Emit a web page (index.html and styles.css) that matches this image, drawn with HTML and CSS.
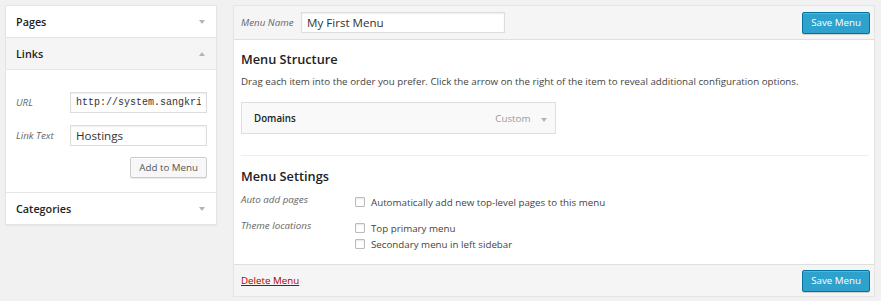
FILE: index.html
```html
<!DOCTYPE html>
<html>
<head>
    <title>Menus</title>
    <meta charset="UTF-8">
    <link rel="stylesheet" href="styles.css">
</head>
<body>
    <div class="wrap">
        <div class="sidebar">
            <div class="section">
                <div class="section-title">Pages <span class="arrow down"></span></div>
            </div>
            <div class="section open">
                <div class="section-title">Links <span class="arrow up"></span></div>
                <div class="section-body">
                    <div class="field">
                        <label>URL</label>
                        <input type="text" class="mono" value="http://system.sangkrit.net">
                    </div>
                    <div class="field">
                        <label>Link Text</label>
                        <input type="text" value="Hostings">
                    </div>
                    <div class="actions">
                        <button class="btn">Add to Menu</button>
                    </div>
                </div>
            </div>
            <div class="section">
                <div class="section-title">Categories <span class="arrow down"></span></div>
            </div>
        </div>

        <div class="menu-edit">
            <div class="menu-header">
                <label class="menu-name-label">Menu Name</label>
                <input type="text" class="menu-name" value="My First Menu">
                <button class="btn primary">Save Menu</button>
            </div>
            <div class="menu-body">
                <h3>Menu Structure</h3>
                <p class="desc">Drag each item into the order you prefer. Click the arrow on the right of the item to reveal additional configuration options.</p>
                <div class="menu-item">
                    <span class="item-title">Domains</span>
                    <span class="item-type">Custom <span class="arrow down"></span></span>
                </div>
                <div class="settings">
                    <h3>Menu Settings</h3>
                    <div class="setting-row">
                        <div class="setting-label">Auto add pages</div>
                        <div class="setting-input">
                            <label><input type="checkbox"> Automatically add new top-level pages to this menu</label>
                        </div>
                    </div>
                    <div class="setting-row">
                        <div class="setting-label">Theme locations</div>
                        <div class="setting-input">
                            <label><input type="checkbox"> Top primary menu</label>
                            <label><input type="checkbox"> Secondary menu in left sidebar</label>
                        </div>
                    </div>
                </div>
            </div>
            <div class="menu-footer">
                <a href="#" class="delete">Delete Menu</a>
                <button class="btn primary">Save Menu</button>
            </div>
        </div>
    </div>
</body>
</html>
```

FILE: styles.css
```css
body {
    margin: 0;
    background: #f1f1f1;
    font-family: "Open Sans", sans-serif;
    font-size: 9.75px;
    color: #444;
}
.wrap {
    display: flex;
    align-items: flex-start;
    padding: 5px 6px 0 5px;
    gap: 16px;
}
.sidebar {
    width: 212px;
    background: #fff;
    border: 1px solid #e5e5e5;
    box-sizing: border-box;
    box-shadow: 0 1px 1px rgba(0,0,0,0.04);
}
.section {
    border-bottom: 1px solid #e5e5e5;
}
.section:last-child {
    border-bottom: none;
}
.section-title {
    display: flex;
    justify-content: space-between;
    align-items: center;
    height: 31px;
    padding: 0 11px 0 10px;
    font-size: 10.8px;
    font-weight: 600;
    color: #222;
}
.open .section-title {
    background: #f5f5f5;
    border-bottom: 1px solid #e5e5e5;
}
.arrow {
    display: inline-block;
    width: 0;
    height: 0;
    border-left: 3px solid transparent;
    border-right: 3px solid transparent;
}
.arrow.down {
    border-top: 4px solid #b4b4b4;
}
.arrow.up {
    border-bottom: 4px solid #b4b4b4;
}
.section-body {
    padding: 22px 9px 14px 10px;
}
.field {
    display: flex;
    align-items: center;
    margin-bottom: 12px;
}
.field label, .menu-name-label, .setting-label {
    font-style: italic;
    color: #666;
}
.field label {
    width: 54px;
}
input[type=text] {
    font-family: "Open Sans", sans-serif;
    font-size: 11.6px;
    color: #333;
    border: 1px solid #ddd;
    box-shadow: inset 0 1px 2px rgba(0,0,0,0.07);
    padding: 2px 5px;
    height: 21px;
    box-sizing: border-box;
    outline: none;
}
.field input {
    width: 137px;
}
input.mono {
    font-family: "Liberation Mono", monospace;
    font-size: 10px;
}
.actions {
    display: flex;
    justify-content: flex-end;
    margin-top: -1px;
}
.btn {
    font-family: "Open Sans", sans-serif;
    font-size: 9.75px;
    height: 21px;
    padding: 0 8px;
    border: 1px solid #ccc;
    border-radius: 2px;
    background: #f7f7f7;
    color: #555;
    box-shadow: inset 0 1px 0 #fff, 0 1px 0 rgba(0,0,0,0.08);
    cursor: pointer;
}
.btn.primary {
    background: #2ea2cc;
    border-color: #0074a2;
    color: #fff;
    box-shadow: inset 0 1px 0 rgba(120,200,230,0.5), 0 1px 0 rgba(0,0,0,0.15);
    height: 22px;
    padding: 0 8px;
}
.menu-edit {
    flex: 1;
    background: #fff;
    border: 1px solid #e5e5e5;
    box-shadow: 0 1px 1px rgba(0,0,0,0.04);
}
.menu-header {
    display: flex;
    align-items: center;
    height: 33px;
    padding: 0 4px 0 7px;
    background: #f5f5f5;
    border-bottom: 1px solid #dfdfdf;
}
.menu-name-label {
    width: 60px;
}
.menu-name {
    width: 204px;
}
.menu-header .btn {
    margin-left: auto;
}
.menu-body {
    padding: 0 5px 0 7px;
}
h3 {
    font-size: 12.75px;
    font-weight: 600;
    color: #222;
    margin: 0;
}
.menu-body > h3 {
    padding-top: 10px;
}
.desc {
    margin: 7px 0 14px 0;
}
.menu-item {
    display: flex;
    justify-content: space-between;
    align-items: center;
    width: 315px;
    height: 32px;
    box-sizing: border-box;
    padding: 0 8px 0 12px;
    background: #f9f9f9;
    border: 1px solid #dfdfdf;
}
.item-title {
    font-weight: 600;
    color: #222;
}
.item-type {
    color: #999;
}
.item-type .arrow {
    margin-left: 8px;
}
.settings {
    margin-top: 21px;
    border-top: 1px solid #eee;
    padding: 11px 0 12px 0;
}
.setting-row {
    display: flex;
    margin-top: 8px;
}
.setting-row + .setting-row {
    margin-top: 9px;
}
.setting-label {
    width: 114px;
}
.setting-input {
    padding-top: 1px;
}
.setting-input label {
    display: flex;
    align-items: center;
    height: 16px;
}
.setting-input input {
    appearance: none;
    margin: 0 6px 0 0;
    width: 10px;
    height: 10px;
    border: 1px solid #bbb;
    border-radius: 1px;
    background: #fff;
    box-shadow: inset 0 1px 2px rgba(0,0,0,0.1);
}
.menu-footer {
    display: flex;
    justify-content: space-between;
    align-items: center;
    height: 31px;
    padding: 0 4px 0 7px;
    background: #f5f5f5;
    border-top: 1px solid #dfdfdf;
}
.delete {
    color: #a00;
}
```
